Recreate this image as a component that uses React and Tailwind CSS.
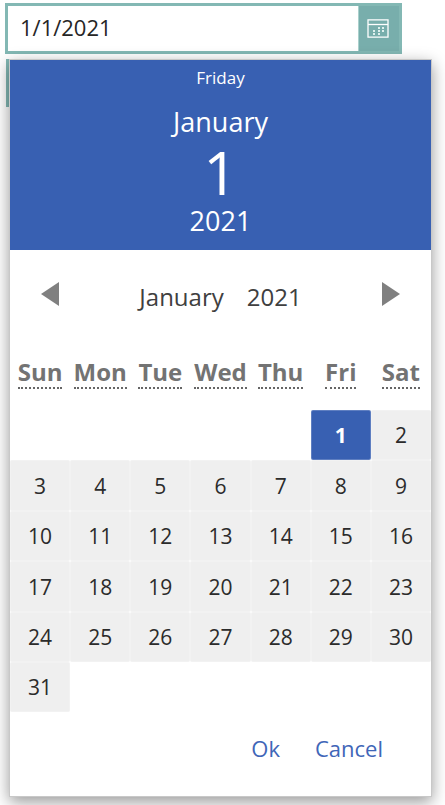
const days = ['Sun', 'Mon', 'Tue', 'Wed', 'Thu', 'Fri', 'Sat'];
const dates = Array.from({ length: 31 }, (_, i) => i + 1);

const CalendarIcon = () => (
    <svg width="22" height="19" viewBox="0 0 22 19" fill="none">
        <path d="M1 .8h20v17.4H1z" stroke="white" strokeWidth="1.3" />
        <path d="M1 5.5h20" stroke="white" strokeWidth="1.3" />
        <path
            d="M11 8h2v2h-2zM15 8h2v2h-2zM6 11h2v2H6zM11 11h2v2h-2zM15 11h2v2h-2zM6 14h2v2H6zM11 14h2v2h-2z"
            fill="#dff0ee"
        />
    </svg>
);

const App = () => {
    return (
        <div className="relative h-[805px] w-[445px] overflow-hidden bg-white font-['Open_Sans',sans-serif]">
            {/* Date input */}
            <div className="ml-[5px] mt-[3px] flex h-[51px] w-[397px] border-[3px] border-[#83b8b4]">
                <div className="flex-1 bg-white pl-[12px] text-[22px] leading-[42px] text-[#262626]">1/1/2021</div>
                <div className="flex w-[41px] items-center justify-center border-l border-[#a9d0cc] bg-[#78aeac] pr-[2px]">
                    <CalendarIcon />
                </div>
            </div>

            {/* Input hidden behind the popup */}
            <div className="absolute left-[6px] top-[59px] h-[48px] w-[4px] bg-[#83b8b4]" />

            {/* Popup */}
            <div className="absolute left-[9px] top-[59px] w-[423px] border border-[#c8c8c8] bg-white shadow-[0_5px_15px_rgba(0,0,0,0.4)]">
                <div className="flex h-[190px] flex-col items-center bg-[#3860b2] text-white">
                    <div className="mt-[6px] text-[17px] leading-[24px]">Friday</div>
                    <div className="mt-[13px] text-[27px] leading-[38px]">January</div>
                    <div className="mt-[1px] text-[60px] leading-[60px]">1</div>
                    <div className="text-[27px] leading-[38px]">2021</div>
                </div>

                {/* Month nav */}
                <div className="flex h-[95px] items-start justify-between px-[31px] pt-[32px]">
                    <svg width="18" height="24" viewBox="0 0 18 24">
                        <path d="M18 0v24L0 12z" fill="#808080" />
                    </svg>
                    <div className="mt-[-1px] flex gap-[23px] text-[24px] leading-[32px] text-[#404040]">
                        <span>January</span>
                        <span>2021</span>
                    </div>
                    <svg width="18" height="24" viewBox="0 0 18 24">
                        <path d="M0 0v24l18-12z" fill="#808080" />
                    </svg>
                </div>

                {/* Day names */}
                <div className="grid h-[65px] grid-cols-7 pt-[12px]">
                    {days.map((day) => (
                        <div key={day} className="text-center">
                            <span className="inline-block border-b-2 border-dotted border-[#666] text-[24px] font-bold leading-[30px] text-[#737373]">
                                {day}
                            </span>
                        </div>
                    ))}
                </div>

                {/* Dates */}
                <div className="grid grid-cols-7">
                    <div className="col-span-5" />
                    {dates.map((d) => (
                        <div
                            key={d}
                            className={
                                d === 1
                                    ? 'flex h-[50.4px] items-center justify-center rounded-[2px] border border-white/20 bg-[#3860b2] pt-[2px] text-[21px] font-bold text-white'
                                    : 'flex h-[50.4px] items-center justify-center rounded-[2px] border border-white/20 bg-[#efefef] pt-[2px] text-[21px] text-[#2b2b2b]'
                            }
                        >
                            {d}
                        </div>
                    ))}
                </div>

                {/* Actions */}
                <div className="flex h-[84px] items-start justify-end gap-[35px] pr-[48px] pt-[20px] text-[22px] leading-[32px] text-[#3f66b8]">
                    <span>Ok</span>
                    <span>Cancel</span>
                </div>
            </div>
        </div>
    );
};

export default App;
